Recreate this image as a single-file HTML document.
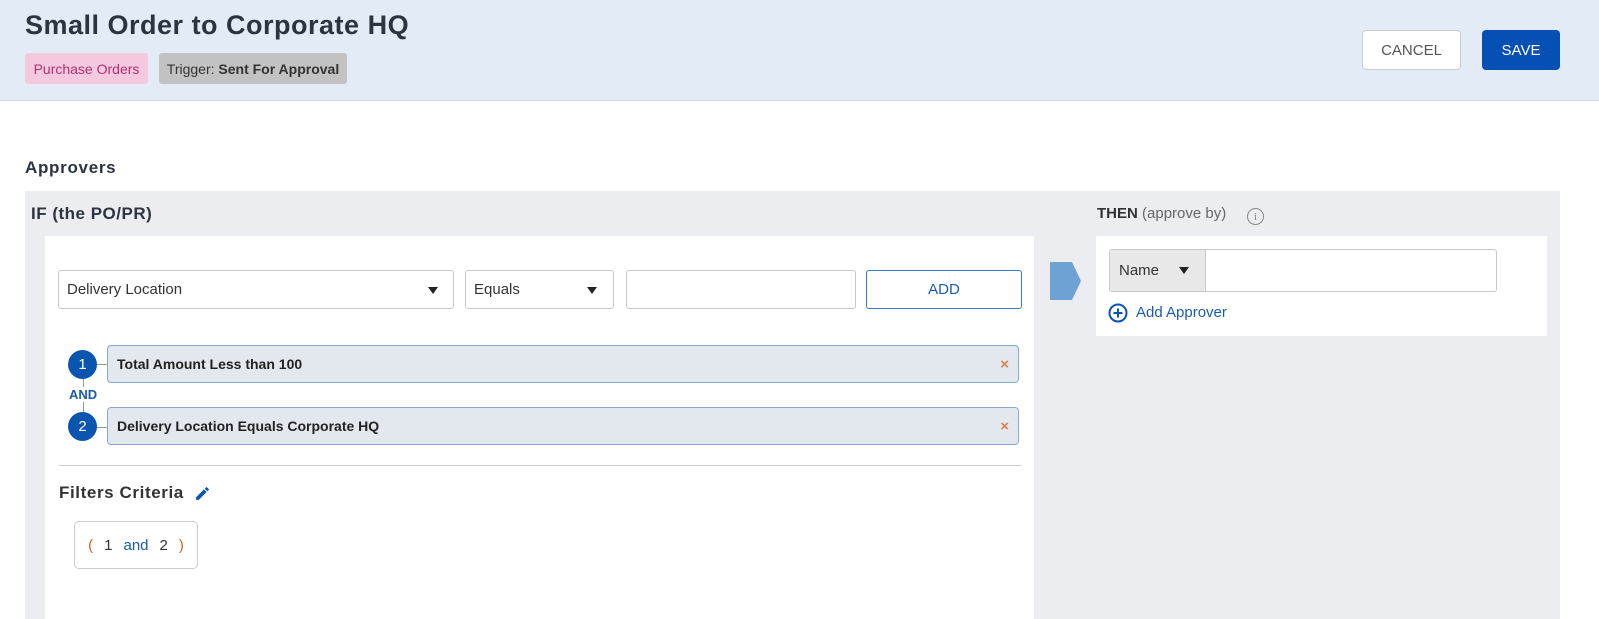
<!DOCTYPE html>
<html><head><style>
*{box-sizing:border-box;margin:0;padding:0}
body{width:1599px;height:619px;overflow:hidden;background:#fff;font-family:"Liberation Sans",sans-serif;position:relative;color:#333}
.a{position:absolute}
.hdr{left:0;top:0;width:1599px;height:101px;background:#e3ecf6;border-bottom:1px solid #d3dce6}
.box{border:1px solid #c8c8c8;border-radius:3px;background:#fff;font-size:15px;color:#333;display:flex;align-items:center;padding:0 8px}
.tri{position:absolute;width:0;height:0;border-left:5px solid transparent;border-right:5px solid transparent;border-top:7px solid #222}
.row{background:#e3e7ee;border:1px solid #8aa8cc;border-radius:4px;font-size:14px;font-weight:bold;color:#222;display:flex;align-items:center;padding-left:9px}
.num{width:29px;height:29px;border-radius:50%;background:#0a55b0;color:#fff;font-size:15px;display:flex;align-items:center;justify-content:center}
.x{position:absolute;right:9px;color:#d8834a;font-size:15px;font-weight:bold}
</style></head><body>
<div class="a hdr"></div>
<div class="a" style="left:25px;top:10px;font-size:27px;font-weight:bold;color:#2b3440;letter-spacing:0.5px">Small Order to Corporate HQ</div>
<div class="a" style="left:25px;top:53px;width:123px;height:31px;background:#f4c9df;border-radius:3px;color:#b03270;font-size:14px;display:flex;align-items:center;justify-content:center">Purchase Orders</div>
<div class="a" style="left:159px;top:53px;width:188px;height:31px;background:#c2c2c2;border-radius:3px;color:#333;font-size:14px;display:flex;align-items:center;justify-content:center">Trigger:&nbsp;<b>Sent For Approval</b></div>
<div class="a" style="left:1362px;top:30px;width:99px;height:40px;background:#fff;border:1px solid #c8cdd3;border-radius:4px;font-size:15px;color:#555;display:flex;align-items:center;justify-content:center">CANCEL</div>
<div class="a" style="left:1482px;top:30px;width:78px;height:40px;background:#0450b4;border-radius:4px;font-size:15px;color:#fff;display:flex;align-items:center;justify-content:center">SAVE</div>

<div class="a" style="left:25px;top:158px;font-size:17px;font-weight:bold;color:#2b3440;letter-spacing:0.7px">Approvers</div>
<div class="a" style="left:25px;top:191px;width:1535px;height:428px;background:#ebedf1"></div>
<div class="a" style="left:31px;top:204px;font-size:17px;font-weight:bold;color:#2b3440;letter-spacing:0.5px">IF (the PO/PR)</div>
<div class="a" style="left:45px;top:236px;width:989px;height:383px;background:#fff"></div>

<div class="a box" style="left:58px;top:270px;width:396px;height:39px">Delivery Location<span class="tri" style="left:369px;top:16px"></span></div>
<div class="a box" style="left:465px;top:270px;width:149px;height:39px">Equals<span class="tri" style="left:121px;top:16px"></span></div>
<div class="a box" style="left:626px;top:270px;width:230px;height:39px"></div>
<div class="a" style="left:866px;top:270px;width:156px;height:39px;border:1px solid #3b78c3;border-radius:3px;color:#1a5cab;font-size:15px;display:flex;align-items:center;justify-content:center">ADD</div>

<div class="a" style="left:83px;top:365px;width:1px;height:62px;background:#999"></div>
<div class="a" style="left:96px;top:364px;width:12px;height:1px;background:#999"></div>
<div class="a" style="left:96px;top:427px;width:12px;height:1px;background:#999"></div>
<div class="a num" style="left:68px;top:350px">1</div>
<div class="a" style="left:69px;top:387px;font-size:13px;font-weight:bold;color:#1a5cab;background:#fff">AND</div>
<div class="a num" style="left:68px;top:412px">2</div>
<div class="a row" style="left:107px;top:345px;width:912px;height:38px">Total Amount Less than 100<span class="x">×</span></div>
<div class="a row" style="left:107px;top:407px;width:912px;height:38px">Delivery Location Equals Corporate HQ<span class="x">×</span></div>

<div class="a" style="left:59px;top:465px;width:962px;height:1px;background:#ccd"></div>
<div class="a" style="left:59px;top:483px;font-size:17px;font-weight:bold;color:#333;letter-spacing:0.6px">Filters Criteria</div>
<svg class="a" style="left:194px;top:485px" width="17" height="17" viewBox="0 0 24 24"><path d="M3 17.25V21h3.75L17.81 9.94l-3.75-3.75L3 17.25zM20.71 7.04a1 1 0 000-1.41l-2.34-2.34a1 1 0 00-1.41 0l-1.83 1.83 3.75 3.75 1.83-1.83z" fill="#0a55b0"/></svg>
<div class="a" style="left:74px;top:521px;width:124px;height:48px;border:1px solid #ccc;border-radius:5px;font-size:15px;display:flex;align-items:center;justify-content:center;gap:11px"><span style="color:#c06a30">(</span><span>1</span><span style="color:#1a5cab">and</span><span>2</span><span style="color:#c06a30">)</span></div>

<svg class="a" style="left:1050px;top:262px" width="32" height="38"><polygon points="0,0 22,0 31,19 22,38 0,38" fill="#6fa2d4"/></svg>

<div class="a" style="left:1097px;top:205px;font-size:15px;color:#333"><b>THEN</b> <span style="color:#666">(approve by)</span></div>
<div class="a" style="left:1247px;top:208px;width:17px;height:17px;border:1.5px solid #888;border-radius:50%;font-size:11px;color:#888;display:flex;align-items:center;justify-content:center;font-family:'Liberation Serif',serif">i</div>
<div class="a" style="left:1096px;top:236px;width:451px;height:100px;background:#fff"></div>
<div class="a" style="left:1109px;top:249px;width:388px;height:43px;border:1px solid #c8c8c8;border-radius:3px;background:#fff"></div>
<div class="a" style="left:1110px;top:250px;width:96px;height:41px;background:#e8e8e8;border-right:1px solid #c8c8c8;font-size:15px;display:flex;align-items:center;padding-left:9px">Name<span class="tri" style="left:69px;top:17px"></span></div>
<svg class="a" style="left:1108px;top:303px" width="20" height="20"><circle cx="10" cy="10" r="8.5" fill="none" stroke="#0a55b0" stroke-width="2"/><path d="M10 5.5v9M5.5 10h9" stroke="#0a55b0" stroke-width="2"/></svg>
<div class="a" style="left:1136px;top:304px;font-size:15px;color:#1a5cab">Add Approver</div>
</body></html>
